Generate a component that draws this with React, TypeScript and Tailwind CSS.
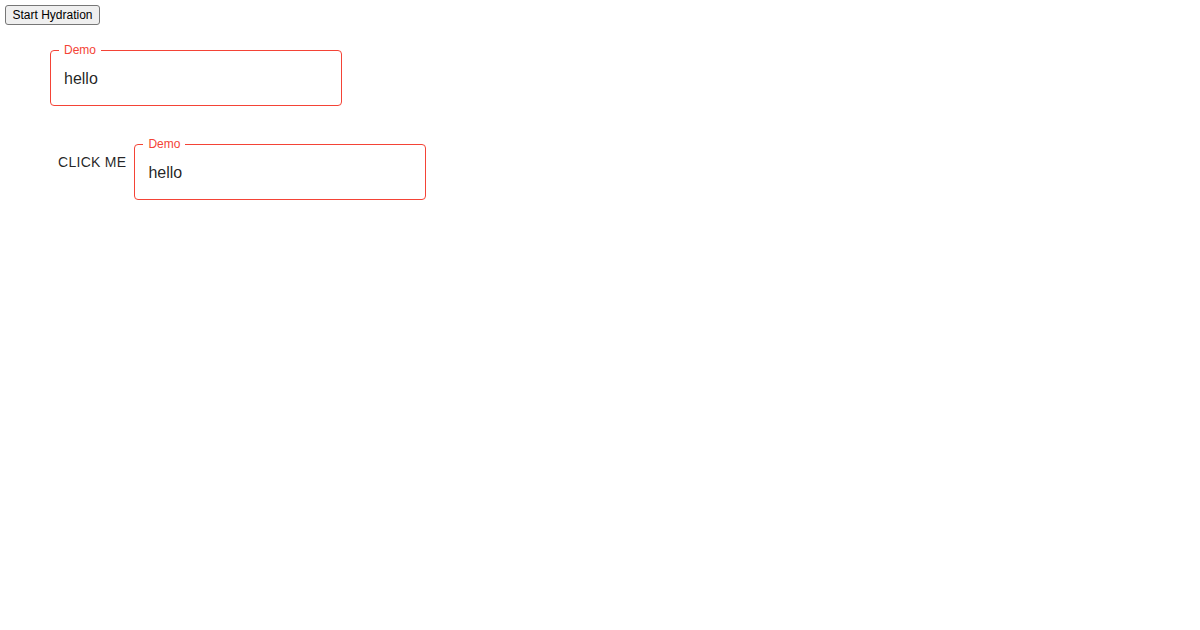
export default function App() {
  return (
    <div className="min-h-screen bg-white font-['Liberation_Sans',_Arial,_sans-serif] text-[rgba(0,0,0,0.87)]">
      <div className="p-[5px] leading-none">
        <button className="h-[20px] w-[95px] rounded-[3px] border border-[#767676] bg-[#efefef] text-[12px] leading-[16px] text-black">
          Start Hydration
        </button>
      </div>

      <div className="flex flex-col items-start gap-[38px] pl-[50px] pt-[20px]">
        <DemoField />
        <div className="flex items-start">
          <button className="min-w-[64px] rounded-[4px] px-[8px] py-[6px] text-[14px] font-normal uppercase leading-[24.5px] tracking-[0.02em] text-[rgba(0,0,0,0.87)]">
            Click me
          </button>
          <DemoField />
        </div>
      </div>
    </div>
  );
}

function DemoField() {
  return (
    <div className="relative h-[56px] w-[292px] rounded-[4px] border border-[#f44336]">
      <span className="absolute -top-[7px] left-[8px] bg-white px-[5px] text-[12px] leading-[12px] text-[#f44336]">
        Demo
      </span>
      <input
        defaultValue="hello"
        className="h-full w-full bg-transparent px-[13px] pt-[2px] text-[16px] text-[rgba(0,0,0,0.87)] outline-none"
      />
    </div>
  );
}
